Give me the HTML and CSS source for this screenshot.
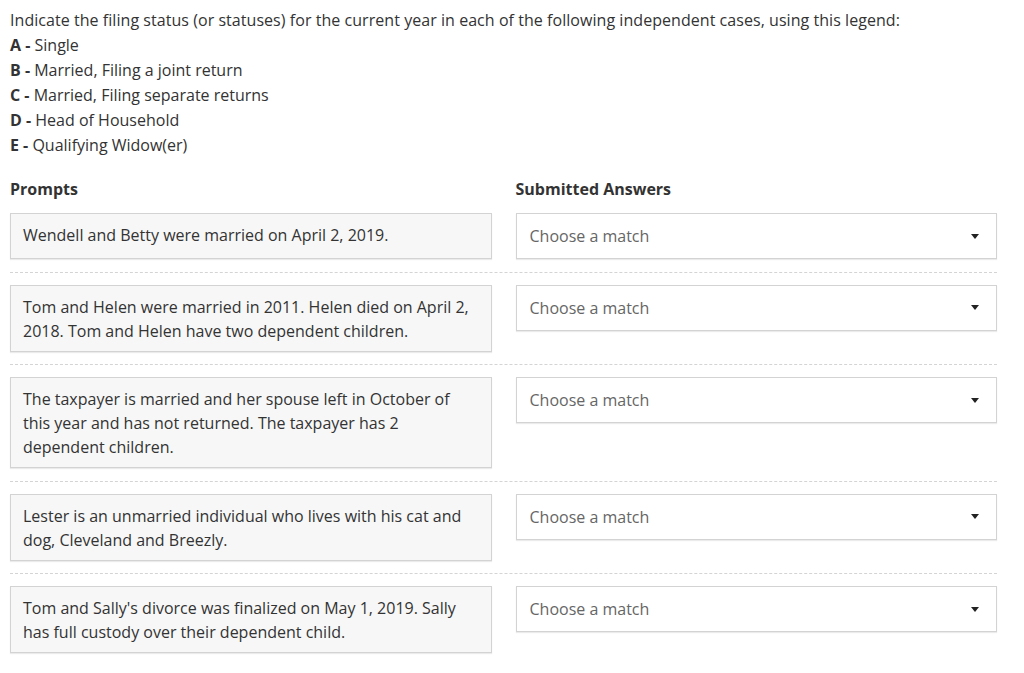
FILE: index.html
```html
<!DOCTYPE html>
<html lang="en">
<head>
    <meta charset="UTF-8">
    <meta name="viewport" content="width=device-width, initial-scale=1.0">
    <title>Filing Status</title>
    <link rel="stylesheet" href="styles.css">
</head>
<body>

<div class="container">
    <h3 class="title">FILING STATUS</h3>
    <p class="instructions">Indicate the filing status (or statuses) for the current year in each of the following independent cases, using this legend:</p>
    <ul class="legend">
        <li><b>A -</b> Single</li>
        <li><b>B -</b> Married, Filing a joint return</li>
        <li><b>C -</b> Married, Filing separate returns</li>
        <li><b>D -</b> Head of Household</li>
        <li><b>E -</b> Qualifying Widow(er)</li>
    </ul>

    <div class="match">
        <div class="match-head">
            <div>Prompts</div>
            <div>Submitted Answers</div>
        </div>

        <div class="match-row">
            <div class="prompt">Wendell and Betty were married on April 2, 2019.</div>
            <div class="answer"><span>Choose a match</span><i class="caret"></i></div>
        </div>
        <div class="match-row">
            <div class="prompt">Tom and Helen were married in 2011. Helen died on April 2, 2018. Tom and Helen have two dependent children.</div>
            <div class="answer"><span>Choose a match</span><i class="caret"></i></div>
        </div>
        <div class="match-row">
            <div class="prompt">The taxpayer is married and her spouse left in October of this year and has not returned. The taxpayer has 2 dependent children.</div>
            <div class="answer"><span>Choose a match</span><i class="caret"></i></div>
        </div>
        <div class="match-row">
            <div class="prompt">Lester is an unmarried individual who lives with his cat and dog, Cleveland and Breezly.</div>
            <div class="answer"><span>Choose a match</span><i class="caret"></i></div>
        </div>
        <div class="match-row last">
            <div class="prompt">Tom and Sally's divorce was finalized on May 1, 2019. Sally has full custody over their dependent child.</div>
            <div class="answer"><span>Choose a match</span><i class="caret"></i></div>
        </div>
    </div>
</div>

</body>
</html>
```

FILE: styles.css
```css
body {
    font-family: "Open Sans", Arial, sans-serif;
    background-color: #fff;
    color: #333;
    margin: 0;
    padding: 0;
}
.container {
    width: 987px;
    padding: 0 10px;
    margin-top: -22px;
}
.title {
    margin: 0;
    font-size: 20px;
    line-height: 26px;
    font-weight: bold;
    color: #333;
    letter-spacing: 1px;
}
.instructions {
    margin: 4px 0 0;
    font-size: 16px;
    line-height: 25px;
    letter-spacing: 0.05px;
}
.legend {
    list-style: none;
    margin: 0;
    padding: 0;
    font-size: 16px;
    line-height: 25px;
}
.match-head {
    display: grid;
    grid-template-columns: 1fr 1fr;
    gap: 24px;
    margin-top: 19px;
    font-size: 16px;
    font-weight: bold;
    line-height: 24px;
}
.match-row {
    display: grid;
    grid-template-columns: 1fr 1fr;
    gap: 24px;
    align-items: start;
    padding: 12px 0 12.5px;
    border-bottom: 1px dashed #d4d4d4;
}
.match-row.last {
    border-bottom: none;
}
.prompt {
    box-sizing: border-box;
    min-height: 46px;
    background-color: #f7f7f7;
    border: 1px solid #d3d3d3;
    box-shadow: 0 1px 1px rgba(0, 0, 0, 0.08);
    padding: 9px 12px 8px;
    font-size: 16px;
    line-height: 24px;
}
.answer {
    display: flex;
    align-items: center;
    justify-content: space-between;
    background-color: #fff;
    border: 1px solid #d3d3d3;
    box-shadow: 0 1px 1px rgba(0, 0, 0, 0.08);
    padding: 10px 17px 10px 13px;
    font-size: 16px;
    line-height: 24px;
    color: #666;
}
.caret {
    width: 0;
    height: 0;
    border-left: 4px solid transparent;
    border-right: 4px solid transparent;
    border-top: 5px solid #222;
}
```
